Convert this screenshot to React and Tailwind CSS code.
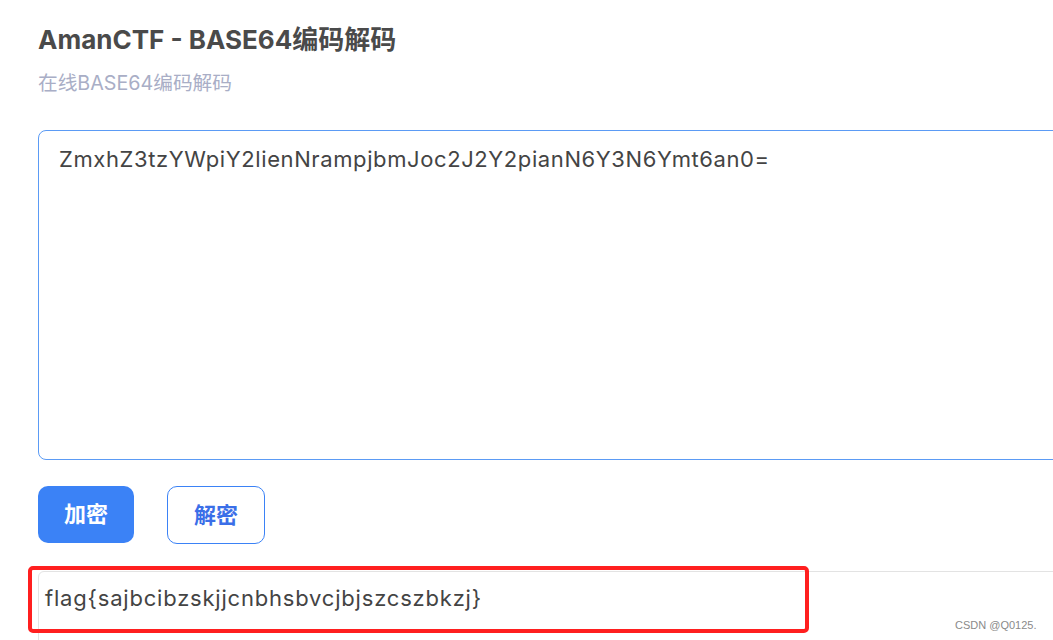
export default function App() {
  const font = { fontFamily: 'Inter, "Noto Sans CJK SC", sans-serif' };
  return (
    <div className="relative w-[1053px] h-[640px] overflow-hidden bg-white" style={font}>
      <div className="flex flex-col pl-[38px] pt-[24px] w-[1200px]">
        <h1 className="text-[26px] leading-[32px] font-bold text-[#4a4a4a]">AmanCTF - BASE64编码解码</h1>
        <p className="mt-[14px] text-[19.7px] leading-[26px] text-[#a9aec6]">在线BASE64编码解码</p>
        <div className="mt-[34px] w-[1100px] h-[330px] border border-[#5b9bf5] rounded-[8px] px-[20px] pt-[13px] text-[22px] tracking-[0.6px] leading-[30px] text-[#444]">
          ZmxhZ3tzYWpiY2lienNrampjbmJoc2J2Y2pianN6Y3N6Ymt6an0=
        </div>
        <div className="mt-[26px] flex gap-[33px]">
          <button className="w-[96px] h-[57px] rounded-[10px] bg-[#3b82f6] text-white text-[22px] font-bold">加密</button>
          <button className="w-[98px] h-[58px] rounded-[10px] border border-[#3b82f6] bg-white text-[#3b6fe8] text-[22px] font-bold">解密</button>
        </div>
        <div className="mt-[27px] w-[1100px] h-[100px] border border-[#e3e3e3] rounded-[6px] px-[6px] pt-[11px] text-[22px] tracking-[0.8px] leading-[30px] text-[#444]">
          flag{'{'}sajbcibzskjjcnbhsbvcjbjszcszbkzj{'}'}
        </div>
      </div>
      <div className="absolute left-[28px] top-[566px] w-[781px] h-[67px] border-[4px] border-[#ff1f1f] rounded-[5px]"></div>
      <div className="absolute left-[955px] top-[617px] text-[11px] text-[#8a8a8a]" style={{ fontFamily: '"Liberation Sans", sans-serif' }}>CSDN @Q0125.</div>
    </div>
  );
}
